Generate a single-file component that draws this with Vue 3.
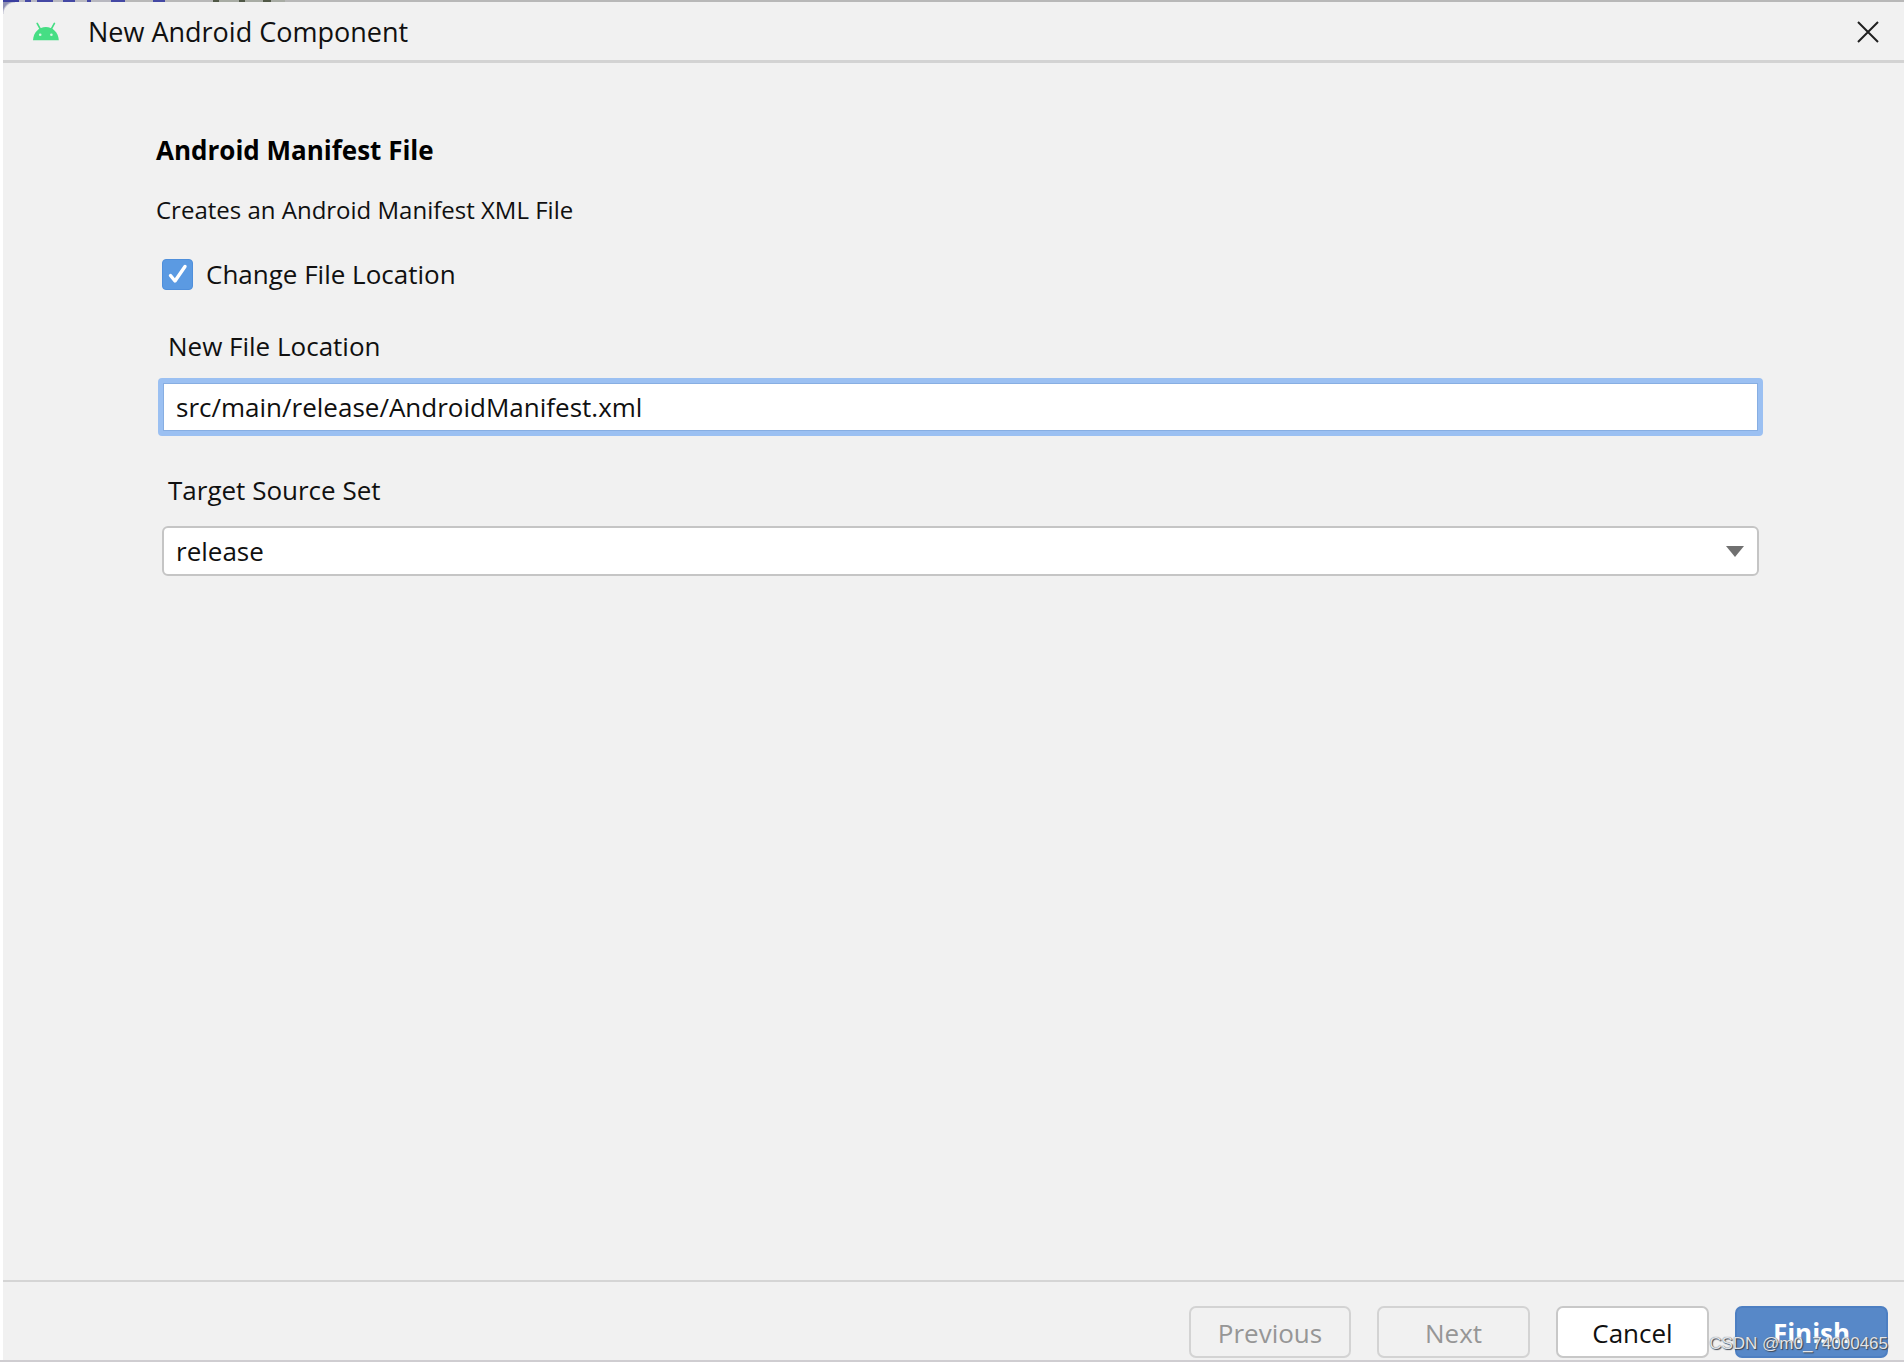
<script setup>
import { ref } from 'vue'

const changeLocation = ref(true)
const location = ref('src/main/release/AndroidManifest.xml')
const sourceSet = ref('release')
</script>

<template>
  <div class="window">
    <div class="behind" aria-hidden="true"></div>
    <header class="titlebar">
      <svg class="logo" width="28" height="20" viewBox="0 0 28 20" aria-hidden="true">
        <path d="M5.2 1.4 8.2 6.8M22.4 1.4 19.4 6.8" stroke="#46de84" stroke-width="1.7" stroke-linecap="round" />
        <path d="M1 18.2C1.4 10.2 7 4.9 13.8 4.9S26.4 10.2 26.8 18.2Z" fill="#46de84" />
        <circle cx="8.2" cy="12.8" r="1.3" fill="#d6f7e3" />
        <circle cx="19.4" cy="12.8" r="1.3" fill="#d6f7e3" />
      </svg>
      <h1>New Android Component</h1>
      <button class="close" type="button" aria-label="Close">
        <svg width="22" height="22" viewBox="0 0 22 22" aria-hidden="true">
          <path d="M1 1 21 21M21 1 1 21" stroke="#202020" stroke-width="2" />
        </svg>
      </button>
    </header>

    <main class="content">
      <h2>Android Manifest File</h2>
      <p class="description">Creates an Android Manifest XML File</p>
      <label class="check">
        <input v-model="changeLocation" type="checkbox" />
        <svg v-if="changeLocation" class="tick" width="31" height="31" viewBox="0 0 31 31" aria-hidden="true">
          <path d="M8.5 16.5 13 22 23 7.5" fill="none" stroke="#fff" stroke-width="3.4" stroke-linecap="round" stroke-linejoin="round" />
        </svg>
        <span>Change File Location</span>
      </label>
      <div class="field">
        <label for="location">New File Location</label>
        <input id="location" v-model="location" type="text" />
      </div>
      <div class="field">
        <label for="source-set">Target Source Set</label>
        <div class="select">
          <select id="source-set" v-model="sourceSet">
            <option>release</option>
          </select>
          <svg width="18" height="11" viewBox="0 0 18 11" aria-hidden="true">
            <path d="M0 0H18L9 11Z" fill="#707070" />
          </svg>
        </div>
      </div>
    </main>

    <footer class="actions">
      <button class="wide" type="button" disabled>Previous</button>
      <button type="button" disabled>Next</button>
      <button type="button">Cancel</button>
      <button class="primary" type="button">Finish</button>
      <span class="watermark">CSDN @m0_74000465</span>
    </footer>
  </div>
</template>

<style>
body {
  margin: 0;
  background: #fff;
}
</style>

<style scoped>
.window {
  box-sizing: border-box;
  min-height: 100vh;
  display: flex;
  flex-direction: column;
  padding-left: 3px;
  border-bottom: 2px solid #cfcdd1;
  background: linear-gradient(#f1f1f1, #f1f1f1) 3px 0 no-repeat, #fff;
  color: #101010;
  font-family: "Open Sans", "Noto Sans", sans-serif;
  font-size: 26px;
  line-height: 36px;
}

.behind {
  height: 2px;
  background:
    linear-gradient(90deg,
      #3b3fa0 0 16px, #b8b8c4 16px 22px, #4448a4 22px 28px, #b8b8c4 28px 34px,
      #4448a4 34px 50px, #b8b8c0 50px 60px, #4448a4 60px 72px, #b8b8c0 72px 84px,
      #4448a4 84px 88px, #b8b8c0 88px 108px, #4448a4 108px 122px, #b8b8b8 122px 150px,
      #4448a4 150px 162px, #b8b8b8 162px 210px, #505846 210px 216px, #a8aca4 216px 236px,
      #505846 236px 242px, #a8aca4 242px 260px, #505846 260px 268px, #a8aca4 268px 282px,
      #b8b8b8 282px);
}

.titlebar {
  box-sizing: border-box;
  display: flex;
  align-items: center;
  height: 61px;
  padding: 2px 25px 0 29px;
  border-bottom: 3px solid #d3d3d3;
  background: radial-gradient(circle at 12px 12px, #f1f1f1 11px, #8f91b4 13px) 0 0 / 12px 12px no-repeat;
}

.logo {
  margin-right: 28px;
}

h1,
h2,
p {
  margin: 0;
}

h1 {
  flex: 1;
  font-size: 27px;
  font-weight: 400;
}

.close {
  display: flex;
  padding: 0;
  border: 0;
  background: none;
}

.content {
  flex: 1;
  padding: 69px 141px 0 153px;
}

h2 {
  color: #000;
  font-size: 26px;
  font-weight: 700;
}

.description {
  margin-top: 27px;
  font-size: 24px;
  line-height: 30px;
}

.check {
  position: relative;
  display: flex;
  align-items: center;
  width: max-content;
  gap: 13px;
  margin: 31px 0 0 6px;
}

.check input {
  appearance: none;
  width: 31px;
  height: 31px;
  margin: 0;
  border: 1px solid #4f8fdb;
  border-radius: 4px;
  background: #5b9ae2;
}

.tick {
  position: absolute;
  left: 0;
  pointer-events: none;
}

.field {
  display: flex;
  flex-direction: column;
  gap: 14px;
  margin: 36px 0 0 2px;
}

.field label {
  padding-left: 10px;
}

#location {
  box-sizing: border-box;
  width: 100%;
  height: 58px;
  padding: 0 13px;
  border: 5px solid #9bc0f2;
  border-radius: 4px;
  outline: 0;
  background: #fff;
  box-shadow: inset 0 0 0 1px #87aee2;
  color: inherit;
  font: inherit;
}

.select {
  position: relative;
  padding: 4px 4px 0;
}

select {
  display: block;
  appearance: none;
  width: 100%;
  height: 50px;
  padding: 0 12px;
  border: 2px solid #c5c5c5;
  border-radius: 6px;
  background: #fff;
  color: inherit;
  font: inherit;
}

.select svg {
  position: absolute;
  right: 19px;
  top: 24px;
  pointer-events: none;
}

.actions {
  position: relative;
  display: flex;
  justify-content: flex-end;
  gap: 26px;
  padding: 24px 16px 2px;
  border-top: 2px solid #d5d5d5;
}

.actions button {
  width: 153px;
  height: 52px;
  padding: 1px 0 0;
  border: 2px solid #c8c8c8;
  border-radius: 7px;
  background: #fff;
  color: #101010;
  font: inherit;
}

.actions button.wide {
  width: 162px;
}

.actions button:disabled {
  border-color: #d3d3d3;
  background: #f1f1f1;
  color: #969696;
}

.actions button.primary {
  border-color: #4d7fc2;
  background: #5788c8;
  color: #fff;
  font-weight: 700;
}

.watermark {
  position: absolute;
  right: 16px;
  bottom: 6px;
  color: #e2e4e8;
  font-family: "Liberation Sans", sans-serif;
  font-size: 17px;
  line-height: 20px;
  text-shadow: 1px 1px 1px #3c4450, 0 0 1px #5a6270;
}
</style>
